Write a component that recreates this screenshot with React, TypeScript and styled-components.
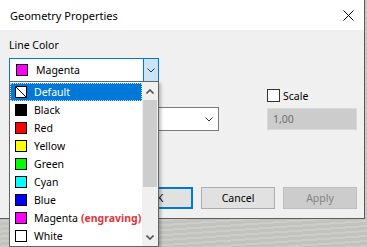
import React from 'react'
import styled, { createGlobalStyle } from 'styled-components'

const GlobalStyle = createGlobalStyle`
  html, body {
    margin: 0;
    padding: 0;
    overflow: hidden;
  }
  body {
    font-family: "Noto Sans", "Liberation Sans", sans-serif;
    font-size: 10.5px;
    color: #000;
  }
  * {
    box-sizing: border-box;
  }
`

interface ColorItem {
  name: string
  color: string
  engraving?: boolean
  isDefault?: boolean
}

const colors: ColorItem[] = [
  { name: 'Default', color: '#ffffff', isDefault: true },
  { name: 'Black', color: '#000000' },
  { name: 'Red', color: '#ff0000' },
  { name: 'Yellow', color: '#ffff00' },
  { name: 'Green', color: '#00ff00' },
  { name: 'Cyan', color: '#00ffff' },
  { name: 'Blue', color: '#0000ff' },
  { name: 'Magenta', color: '#ff00ff', engraving: true },
  { name: 'White', color: '#ffffff' },
]

const Desktop = styled.div`
  width: 367px;
  height: 247px;
  overflow: hidden;
  background:
    repeating-linear-gradient(176deg, rgba(255, 255, 255, 0.08) 0 2px, rgba(0, 0, 0, 0.03) 2px 5px),
    #c8c8c4;
`

const Dialog = styled.div`
  width: 365px;
  height: 219px;
  display: flex;
  flex-direction: column;
  border-right: 1px solid #5c5c5c;
  border-bottom: 1px solid #5c5c5c;
`

const TitleBar = styled.div`
  height: 30px;
  flex: none;
  background: #fff;
  display: flex;
  align-items: center;
  justify-content: space-between;
  padding: 0 10px 0 10px;
`

const Title = styled.span`
  font-size: 11px;
  color: #000;
`

const CloseIcon = styled.svg`
  display: block;
`

const Body = styled.div`
  flex: 1;
  background: #f0f0f0;
  padding: 8px 7px 9px 9px;
  display: flex;
  flex-direction: column;
`

const Label = styled.div`
  height: 15px;
  line-height: 15px;
`

const ComboWrap = styled.div`
  position: relative;
  width: 150px;
  margin-top: 5px;
`

const Combo = styled.div`
  height: 24px;
  border: 1px solid #0078d7;
  background: #fff;
  display: flex;
`

const ComboValue = styled.div`
  flex: 1;
  display: flex;
  align-items: center;
  gap: 8px;
  padding-left: 6px;
`

const ComboButton = styled.div`
  width: 15px;
  border-left: 1px solid #0078d7;
  background: #cce4f7;
  display: flex;
  align-items: center;
  justify-content: center;
`

const Swatch = styled.span<{ $color: string; $isDefault?: boolean }>`
  width: 12px;
  height: 12px;
  flex: none;
  border: 1px solid #000;
  background: ${(p) =>
    p.$isDefault
      ? 'linear-gradient(45deg, #fff calc(50% - 0.7px), #000 calc(50% - 0.7px), #000 calc(50% + 0.7px), #fff calc(50% + 0.7px))'
      : p.$color};
`

const Popup = styled.div`
  position: absolute;
  top: 23px;
  left: 0;
  width: 150px;
  height: 166px;
  border: 1px solid #646464;
  background: #fff;
  display: flex;
  box-shadow: 2px 2px 3px rgba(0, 0, 0, 0.25);
  z-index: 2;
`

const Items = styled.div`
  flex: 1;
  padding-top: 1px;
  display: flex;
  flex-direction: column;
`

const Item = styled.div<{ $selected?: boolean }>`
  height: 18px;
  flex: none;
  display: flex;
  align-items: center;
  gap: 7px;
  padding-left: 4px;
  border: 1px ${(p) => (p.$selected ? 'dotted rgba(255, 255, 255, 0.75)' : 'solid transparent')};
  background: ${(p) => (p.$selected ? '#0078d7' : 'transparent')};
  color: ${(p) => (p.$selected ? '#fff' : '#000')};
`

const Engraving = styled.span`
  font-weight: bold;
  color: #e2333b;
  margin-left: 3px;
`

const ScrollBar = styled.div`
  width: 16px;
  background: #f0f0f0;
  display: flex;
  flex-direction: column;
`

const ScrollArrow = styled.div<{ $bottom?: boolean }>`
  height: 18px;
  flex: none;
  display: flex;
  align-items: center;
  justify-content: center;
  margin-top: ${(p) => (p.$bottom ? 'auto' : '0')};
`

const Thumb = styled.div`
  height: 87px;
  margin: 0 1px;
  background: #cdcdcd;
`

const Row = styled.div`
  display: grid;
  grid-template-columns: 210px 1fr;
  column-gap: 48px;
  margin-top: 7px;
`

const Select = styled.div`
  margin-top: 18px;
  height: 24px;
  border: 1px solid #7a7a7a;
  background: #fff;
  display: flex;
  align-items: center;
  justify-content: flex-end;
  padding-right: 5px;
`

const ScaleGroup = styled.div`
  display: flex;
  flex-direction: column;
`

const CheckRow = styled.label`
  height: 13px;
  display: flex;
  align-items: center;
  gap: 3px;
`

const CheckBox = styled.span`
  width: 13px;
  height: 13px;
  border: 1px solid #333;
  background: #fff;
`

const TextBox = styled.div`
  margin-top: 6px;
  height: 22px;
  border: 1px solid #d9d9d9;
  background: #cccccc;
  color: #6d6d6d;
  display: flex;
  align-items: center;
  padding-left: 5px;
`

const Buttons = styled.div`
  margin-top: auto;
  display: flex;
  justify-content: flex-end;
  gap: 8px;
`

const Button = styled.button<{ $default?: boolean }>`
  width: 74px;
  height: 22px;
  padding: 0;
  font: inherit;
  background: ${(p) => (p.disabled ? '#cccccc' : '#e1e1e1')};
  color: ${(p) => (p.disabled ? '#838383' : '#000')};
  border: ${(p) => (p.$default ? '2px solid #0078d7' : p.disabled ? '1px solid #bfbfbf' : '1px solid #adadad')};
`

const Chevron = ({ up, color = '#333', weight = 1 }: { up?: boolean; color?: string; weight?: number }) => (
  <svg width="8" height="5" viewBox="0 0 8 5">
    <path
      d={up ? 'M0.5 4.5 L4 1 L7.5 4.5' : 'M0.5 0.5 L4 4 L7.5 0.5'}
      fill="none"
      stroke={color}
      strokeWidth={weight}
    />
  </svg>
)

export default function App() {
  return (
    <Desktop>
      <GlobalStyle />
      <Dialog>
        <TitleBar>
          <Title>Geometry Properties</Title>
          <CloseIcon width="11" height="11" viewBox="0 0 11 11">
            <path d="M0.5 0.5 L10.5 10.5 M10.5 0.5 L0.5 10.5" stroke="#000" strokeWidth="1" />
          </CloseIcon>
        </TitleBar>
        <Body>
          <Label>Line Color</Label>
          <ComboWrap>
            <Combo>
              <ComboValue>
                <Swatch $color="#ff00ff" />
                Magenta
              </ComboValue>
              <ComboButton>
                <Chevron />
              </ComboButton>
            </Combo>
            <Popup>
              <Items>
                {colors.map((c, i) => (
                  <Item key={c.name} $selected={i === 0}>
                    <Swatch $color={c.color} $isDefault={c.isDefault} />
                    <span>
                      {c.name}
                      {c.engraving && <Engraving>(engraving)</Engraving>}
                    </span>
                  </Item>
                ))}
              </Items>
              <ScrollBar>
                <ScrollArrow>
                  <Chevron up color="#555" weight={1.6} />
                </ScrollArrow>
                <Thumb />
                <ScrollArrow $bottom>
                  <Chevron color="#555" weight={1.6} />
                </ScrollArrow>
              </ScrollBar>
            </Popup>
          </ComboWrap>
          <Row>
            <Select>
              <Chevron />
            </Select>
            <ScaleGroup>
              <CheckRow>
                <CheckBox />
                Scale
              </CheckRow>
              <TextBox>1,00</TextBox>
            </ScaleGroup>
          </Row>
          <Buttons>
            <Button $default>OK</Button>
            <Button>Cancel</Button>
            <Button disabled>Apply</Button>
          </Buttons>
        </Body>
      </Dialog>
    </Desktop>
  )
}
